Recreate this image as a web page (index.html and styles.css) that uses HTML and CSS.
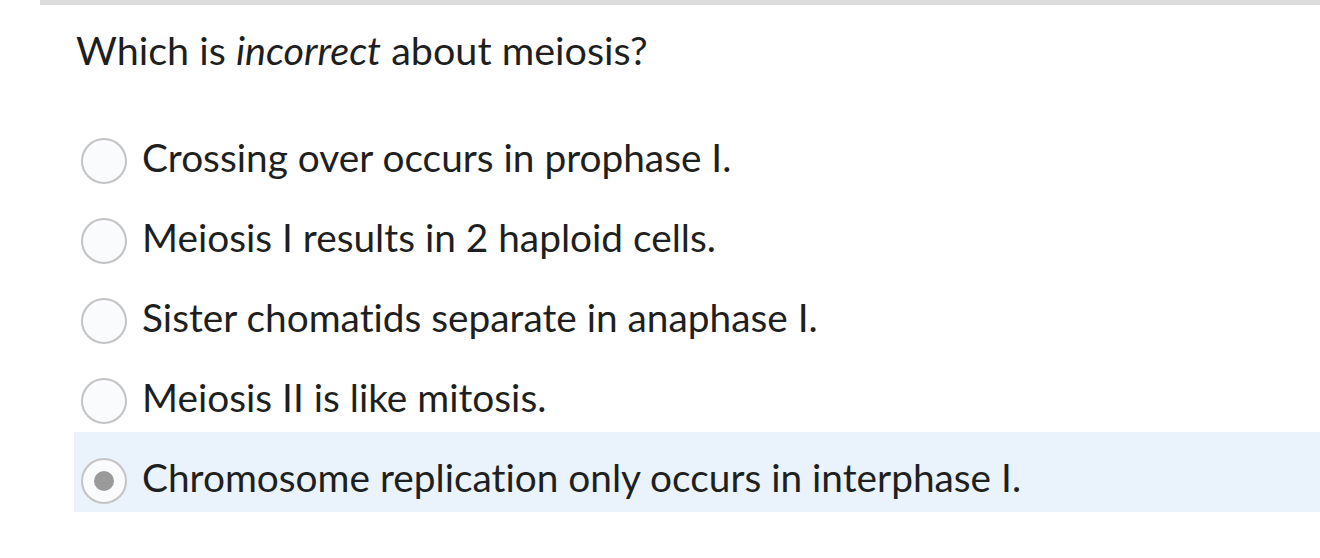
FILE: index.html
```html
<!DOCTYPE html>
<html>
<head>
<meta charset="utf-8">
<link rel="stylesheet" href="styles.css">
</head>
<body>
<div class="topbar"></div>
<div class="question">
  <p class="prompt">Which is <em>incorrect</em> about meiosis?</p>
  <div class="options">
    <label class="option"><span class="radio"></span><span class="text">Crossing over occurs in prophase I.</span></label>
    <label class="option"><span class="radio"></span><span class="text">Meiosis I results in 2 haploid cells.</span></label>
    <label class="option"><span class="radio"></span><span class="text">Sister chomatids separate in anaphase I.</span></label>
    <label class="option"><span class="radio"></span><span class="text">Meiosis II is like mitosis.</span></label>
    <label class="option selected"><span class="radio"><span class="dot"></span></span><span class="text">Chromosome replication only occurs in interphase I.</span></label>
  </div>
</div>
</body>
</html>
```
FILE: styles.css
```css
html, body {
  margin: 0;
  padding: 0;
  background: #ffffff;
}
body {
  font-family: "Lato", "Open Sans", sans-serif;
  color: #1e1f21;
  font-variant-ligatures: none;
}
.topbar {
  margin-left: 40px;
  height: 5px;
  background: #dcdcdc;
}
.question {
  padding-left: 74px;
}
.prompt {
  margin: 21px 0 0 2px;
  font-size: 39.5px;
  line-height: 48px;
}
.prompt em {
  font-style: italic;
}
.options {
  margin-top: 38px;
  display: flex;
  flex-direction: column;
}
.option {
  display: flex;
  align-items: center;
  gap: 15px;
  height: 62px;
  padding: 18px 0 0 7px;
}
.option.selected {
  background: #eaf2fb;
}
.radio {
  box-sizing: border-box;
  width: 46px;
  height: 46px;
  border: 2px solid #c3c3c3;
  border-radius: 50%;
  background: #fafbfd;
  display: flex;
  align-items: center;
  justify-content: center;
  flex: none;
}
.dot {
  width: 20px;
  height: 20px;
  border-radius: 50%;
  background: #9a9a9a;
}
.text {
  font-size: 38.8px;
  line-height: 48px;
  padding-bottom: 9px;
}
```
